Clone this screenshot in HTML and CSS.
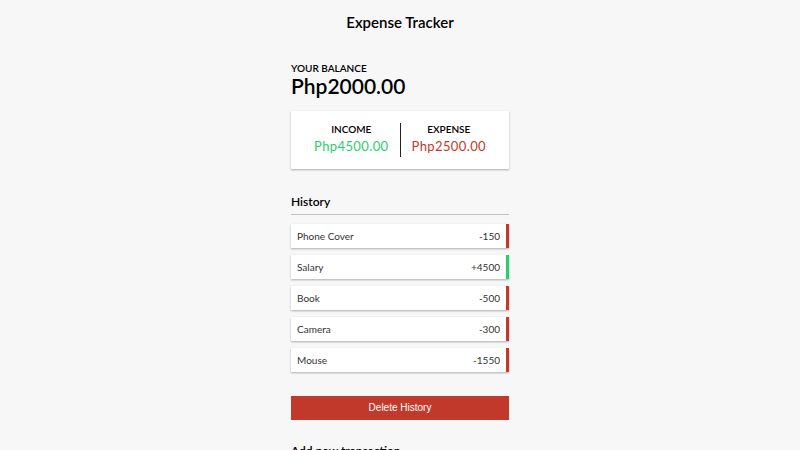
FILE: index.html
```html
<!DOCTYPE html>
<html lang="en">
<head>
<meta charset="utf-8">
<meta name="viewport" content="width=device-width, initial-scale=1">
<title>Expense Tracker</title>
<link rel="stylesheet" href="styles.css">
</head>
<body>
<h2 class="title">Expense Tracker</h2>
<main class="container">
  <section class="balance">
    <h4>Your Balance</h4>
    <h1>Php2000.00</h1>
  </section>
  <section class="summary">
    <div class="summary-item">
      <h4>Income</h4>
      <p class="money plus">Php4500.00</p>
    </div>
    <div class="summary-item">
      <h4>Expense</h4>
      <p class="money minus">Php2500.00</p>
    </div>
  </section>
  <section>
    <h3>History</h3>
    <ul class="list">
      <li class="minus-row">Phone Cover <span>-150</span></li>
      <li class="plus-row">Salary <span>+4500</span></li>
      <li class="minus-row">Book <span>-500</span></li>
      <li class="minus-row">Camera <span>-300</span></li>
      <li class="minus-row">Mouse <span>-1550</span></li>
    </ul>
    <button class="btn" type="button">Delete History</button>
  </section>
  <section class="add">
    <h3>Add new transaction</h3>
  </section>
</main>
</body>
</html>
```

FILE: styles.css
```css
* {
  box-sizing: border-box;
}

html {
  scrollbar-width: none;
}

body {
  margin: 0;
  padding: 13px 0 40px;
  background: #f7f7f7;
  color: #000;
  font-family: Lato, sans-serif;
  font-size: 10px;
  line-height: 18px;
}

h1, h2, h3, h4, p {
  margin: 0;
  font-weight: 600;
}

.title {
  font-size: 15px;
  text-align: center;
}

.container {
  width: 100%;
  max-width: 218px;
  margin: 31px auto 0;
}

h4 {
  font-size: 10px;
  line-height: 12px;
  text-transform: uppercase;
}

h1 {
  font-size: 21px;
  line-height: 24px;
}

.summary {
  display: flex;
  margin: 13px 0 24px;
  padding: 12px;
  background: #fff;
  box-shadow: 0 1px 2px rgba(0, 0, 0, 0.3);
}

.summary-item {
  flex: 1;
  text-align: center;
}

.summary-item + .summary-item {
  border-left: 1px solid #222;
}

.money {
  font-size: 13px;
  font-weight: 400;
  line-height: 22px;
  letter-spacing: 0.03em;
}

.plus {
  color: #2ecc71;
}

.minus {
  color: #c0392b;
}

h3 {
  padding-bottom: 3px;
  border-bottom: 1px solid #c4c4c4;
  font-size: 12px;
}

.list {
  display: grid;
  gap: 7px;
  margin: 9px 0 24px;
  padding: 0;
  list-style: none;
}

.list li {
  display: flex;
  justify-content: space-between;
  padding: 3px 6px;
  background: #fff;
  border-right: 3px solid #c0392b;
  box-shadow: 0 1px 2px rgba(0, 0, 0, 0.3);
  color: #333;
}

.list .plus-row {
  border-right-color: #2ecc71;
}

.btn {
  display: block;
  width: 100%;
  padding: 4px;
  border: 0;
  background: #c0392b;
  color: #fff;
  font: 10px/16px "Liberation Sans", sans-serif;
}

.add {
  margin-top: 22px;
}
```
